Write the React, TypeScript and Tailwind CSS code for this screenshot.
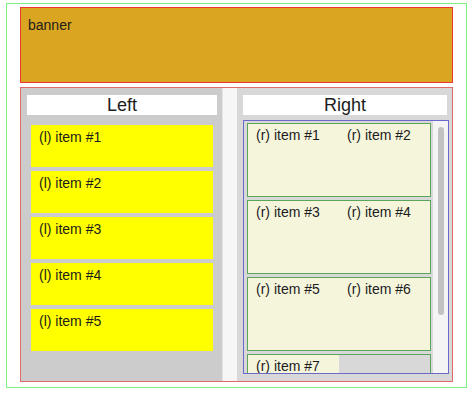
const leftItems = [1, 2, 3, 4, 5];
const cards = [[1, 2], [3, 4], [5, 6], [7]];

const App = () => {
  return (
    <div className="w-[474px] h-[395px] bg-white pl-[6px] pt-[3px] font-['Liberation_Sans',Arial,sans-serif] text-[14px] leading-[16px] text-[#1c1c1c]">
      <div className="w-[461px] h-[385px] border border-[#7cf07c] px-[13px] pt-[3px] flex flex-col gap-[4px]">
        {/* banner */}
        <div className="h-[76px] border border-[#e8392f] bg-[#daa520] px-[7px] pt-[9px]">banner</div>

        {/* main */}
        <div className="h-[295px] border border-[#e06a6a] flex">
          {/* left column with empty scroll track */}
          <div className="w-[216px] flex">
            <div className="flex-1 bg-[#cccccc] pt-[7px]">
              <div className="ml-[6px] w-[190px] h-[20px] bg-white text-center text-[18px] leading-[20px]">Left</div>
              <div className="mt-[10px] flex flex-col gap-[4px]">
                {leftItems.map((n) => (
                  <div key={n} className="ml-[10px] w-[182px] h-[42px] bg-[#ffff00] px-2 pt-[4px]">
                    (l) item #{n}
                  </div>
                ))}
              </div>
            </div>
            <div className="w-[15px] bg-[#f6f6f6] border-l border-[#e4e4e4]"></div>
          </div>

          {/* right column */}
          <div className="flex-1 bg-[#d8d8d8] pt-[7px]">
            <div className="ml-[6px] w-[204px] h-[20px] bg-white text-center text-[18px] leading-[20px]">Right</div>
            <div className="ml-[6px] mt-[5px] w-[206px] h-[254px] border border-[#6a6acc] flex overflow-hidden">
              <div className="w-[189px] pt-[2px] flex flex-col gap-[3px]">
                {cards.map((c, i) => (
                  <div key={i} className="ml-[3px] w-[184px] h-[74px] shrink-0 border border-[#5aa55a] grid grid-cols-2">
                    {c.map((n) => (
                      <div key={n} className="bg-[#f5f5dc] px-2 pt-[3px]">
                        (r) item #{n}
                      </div>
                    ))}
                  </div>
                ))}
              </div>
              <div className="w-[15px] bg-[#f4f4f4] pt-[6px]">
                <div className="ml-[5px] w-[6px] h-[188px] rounded-full bg-[#c2c2c2]"></div>
              </div>
            </div>
          </div>
        </div>
      </div>
    </div>
  );
};

export default App;
